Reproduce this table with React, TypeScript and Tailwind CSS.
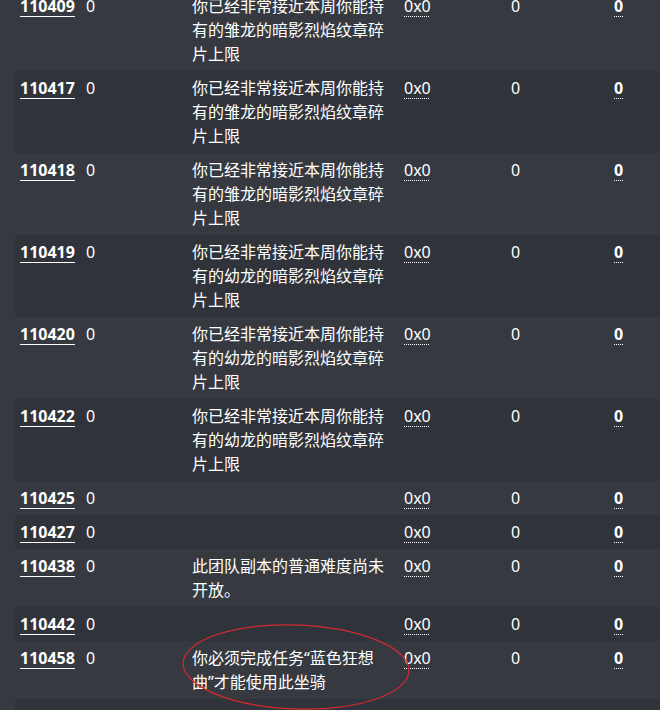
import React from 'react';

type Row = { id: string; text?: string };

const LONG_A = '你已经非常接近本周你能持有的雏龙的暗影烈焰纹章碎片上限';
const LONG_B = '你已经非常接近本周你能持有的幼龙的暗影烈焰纹章碎片上限';

const rows: Row[] = [
  { id: '110409', text: LONG_A },
  { id: '110417', text: LONG_A },
  { id: '110418', text: LONG_A },
  { id: '110419', text: LONG_B },
  { id: '110420', text: LONG_B },
  { id: '110422', text: LONG_B },
  { id: '110425' },
  { id: '110427' },
  { id: '110438', text: '此团队副本的普通难度尚未开放。' },
  { id: '110442' },
  { id: '110458', text: '你必须完成任务“蓝色狂想曲”才能使用此坐骑' },
  { id: '110460' },
];

const cell = 'px-[5px] py-[5px]';

export default function App() {
  return (
    <div
      className="relative w-[660px] h-[710px] overflow-hidden bg-[#363a40] text-white text-[16px] leading-[24px]"
      style={{ fontFamily: '"Noto Sans", "Noto Sans CJK SC", sans-serif' }}
    >
      <div className="-mt-[11px] ml-[15px] flex flex-col">
        {rows.map((r, i) => (
          <div
            key={r.id}
            className={`grid grid-cols-[66px_106px_212px_107px_103px_1fr] ${i % 2 === 1 ? 'bg-[#30343a]' : 'bg-[#363a40]'}`}
          >
            <div className={cell}>
              <span className="font-bold underline underline-offset-[4px] decoration-1">{r.id}</span>
            </div>
            <div className={cell}>0</div>
            <div className="pl-[5px] pr-[13px] py-[5px]">{r.text ?? ''}</div>
            <div className={cell}>
              <span className="underline decoration-dotted underline-offset-[4px] decoration-1">0x0</span>
            </div>
            <div className={cell}>0</div>
            <div className={cell}>
              <span className="font-bold underline decoration-dotted underline-offset-[4px] decoration-1">0</span>
            </div>
          </div>
        ))}
      </div>

      {/* hand-drawn red circle marking */}
      <svg className="absolute left-0 top-0 pointer-events-none" width="660" height="710">
        <ellipse cx="296" cy="667" rx="113" ry="42" fill="none" stroke="#d42a2f" strokeWidth="1.2" transform="rotate(2 296 667)" />
      </svg>
    </div>
  );
}
